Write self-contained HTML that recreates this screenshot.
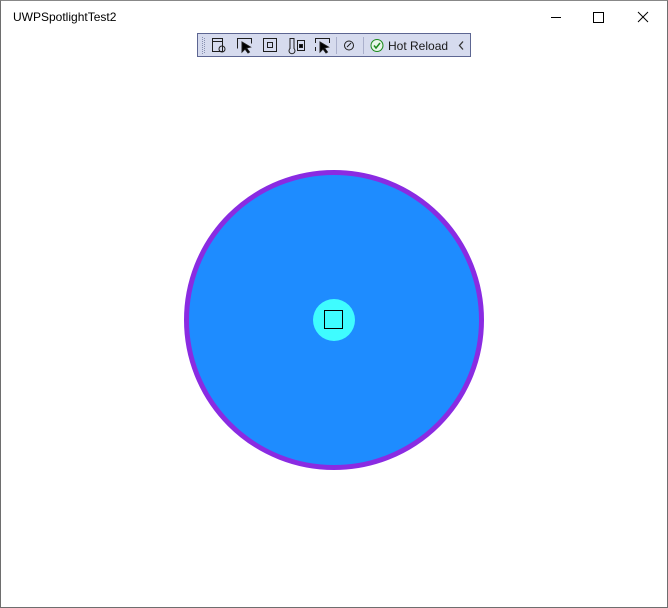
<!DOCTYPE html>
<html><head><style>
html,body{margin:0;padding:0;background:#fff;}
body{width:668px;height:608px;position:relative;overflow:hidden;font-family:"Liberation Sans",sans-serif;}
.win{position:absolute;left:0;top:0;width:666px;height:606px;border:1px solid #6e6e6e;border-top-color:#888;}
.title{position:absolute;left:13px;top:10px;font-size:12px;color:#000;}
.tb{position:absolute;left:197px;top:33px;width:272px;height:22px;background:#d6dbee;border:1px solid #5d6692;}
.sep{position:absolute;top:3px;width:1px;height:17px;background:#aab0cc;}
.hr{position:absolute;left:190px;top:5px;font-size:12px;color:#1a1a1a;}
.outer{position:absolute;left:184px;top:170px;width:290px;height:290px;border:5px solid #8a2be2;border-radius:50%;background:#1e8cff;}
.inner{position:absolute;left:313px;top:299px;width:42px;height:42px;border-radius:50%;background:#3ffcff;}
.sq{position:absolute;left:324px;top:310px;width:17px;height:17px;border:1px solid #000;}
</style></head><body>
<div class="win"></div>
<div class="title">UWPSpotlightTest2</div>
<svg style="position:absolute;left:540px;top:8px" width="120" height="20" fill="none" stroke="#000" stroke-width="1">
<line x1="11" y1="9.5" x2="21" y2="9.5"/>
<rect x="53.5" y="4.5" width="10" height="10"/>
<line x1="98" y1="4" x2="108" y2="14"/><line x1="108" y1="4" x2="98" y2="14"/>
</svg>
<div class="tb">
<svg width="272" height="22" style="position:absolute;left:0;top:0" fill="none" stroke="#1e1e1e" stroke-width="1">
<g stroke="#8890b0" stroke-dasharray="1 1"><line x1="4.5" y1="3" x2="4.5" y2="20"/><line x1="6.5" y1="4" x2="6.5" y2="20"/></g>
<rect x="14.5" y="4.5" width="10" height="13"/><line x1="15" y1="7.5" x2="24" y2="7.5"/><circle cx="24" cy="15" r="3"/>
<path d="M39.5 14.5V4.5H53.5V9.5"/><path d="M44 8l0 10 3-3 3 4 1.5-1-3-4 4-1z" fill="#000"/>
<rect x="65.5" y="4.5" width="13" height="13"/><rect x="69.5" y="8.5" width="5" height="5"/>
<path d="M92 4.5h4v10a3 3 0 1 1-4 0z"/><rect x="99.5" y="6.5" width="7" height="10"/><rect x="101.5" y="10.5" width="3" height="3" fill="#000"/>
<path d="M117.5 9V4.5H131.5V9M117.5 13v4"/><path d="M122 8l0 10 3-3 3 4 1.5-1-3-4 4-1z" fill="#000"/>
<circle cx="151" cy="11.5" r="4.5"/><path d="M149 13l4-4" />
<circle cx="179" cy="11.5" r="6" stroke="#1c8a1c" fill="#e8f6e8"/><path d="M176 11.5l2 2.5 4-5" stroke="#1c8a1c" stroke-width="1.5"/>
<path d="M265 7.5l-3.5 4 3.5 4" stroke="#333" stroke-width="1.3"/>
</svg>
<div class="sep" style="left:138px"></div>
<div class="sep" style="left:165px"></div>
<div class="hr">Hot Reload</div>
</div>
<div class="outer"></div>
<div class="inner"></div>
<div class="sq"></div>
</body></html>
